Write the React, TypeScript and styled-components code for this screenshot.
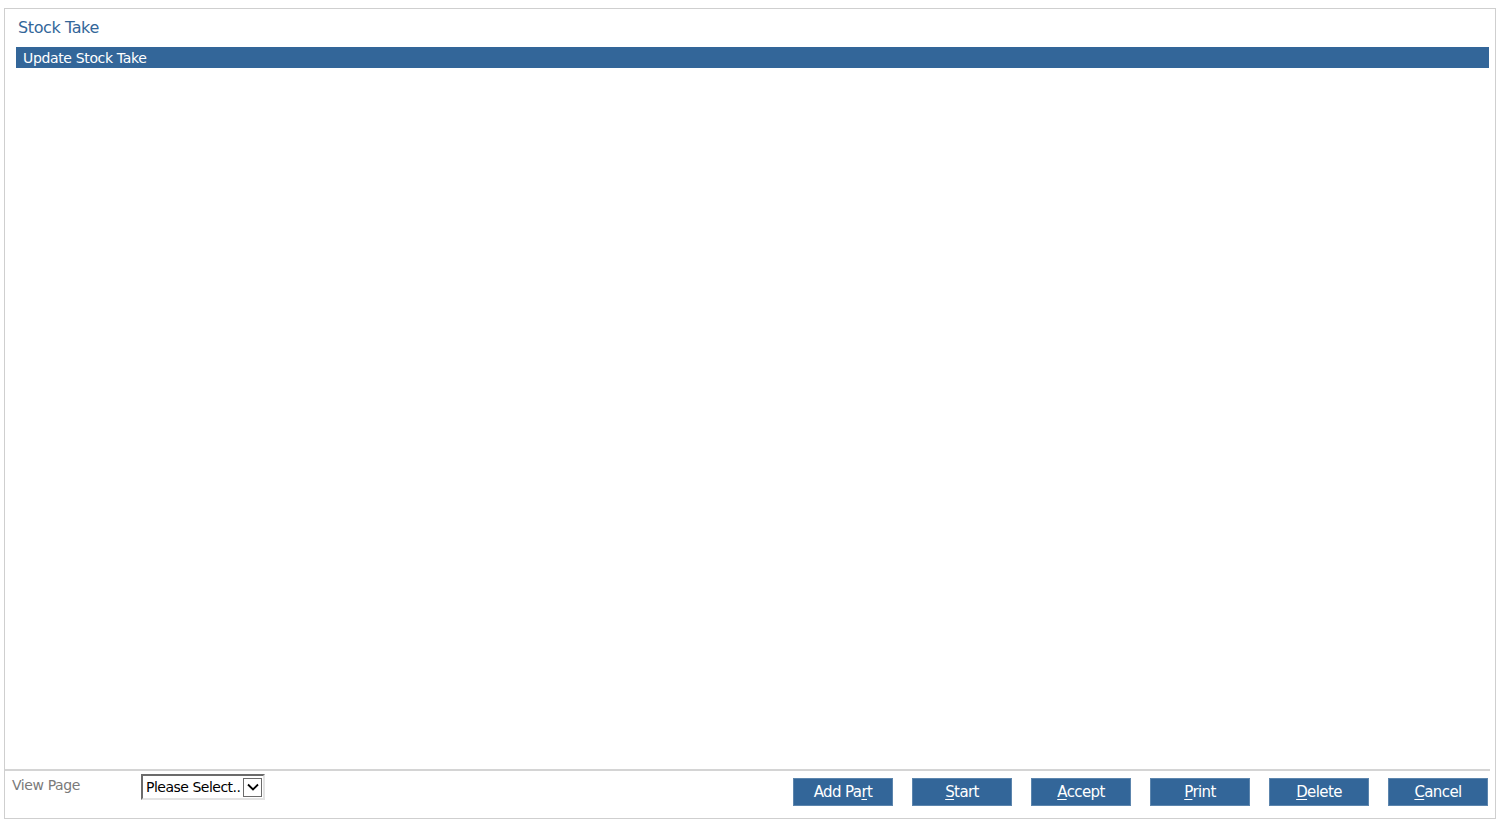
import styled, { createGlobalStyle } from "styled-components"

const GlobalStyle = createGlobalStyle`
    html, body {
        margin: 0;
        padding: 0;
        background: #ffffff;
        font-family: "DejaVu Sans", Verdana, sans-serif;
    }
`

const Frame = styled.div`
    box-sizing: border-box;
    margin: 8px 6px 0 4px;
    height: 811px;
    border: 1px solid #cfcfcf;
    display: flex;
    flex-direction: column;
`

const Title = styled.h1`
    margin: 0;
    padding: 9px 0 0 13px;
    height: 30px;
    box-sizing: border-box;
    font-size: 16px;
    font-weight: normal;
    color: #336699;
    letter-spacing: -0.4px;
`

const SectionBar = styled.div`
    margin: 8px 6px 0 11px;
    box-sizing: border-box;
    height: 21px;
    background: #336699;
    color: #ffffff;
    font-size: 14px;
    line-height: 21px;
    padding: 1px 0 0 7px;
    letter-spacing: -0.35px;
`

const Body = styled.div`
    flex: 1;
`

const Footer = styled.div`
    margin-right: 5px;
    height: 47px;
    border-top: 2px solid #d4d4d4;
    display: flex;
    align-items: flex-start;
`

const PageLabel = styled.span`
    width: 129px;
    padding: 6px 0 0 7px;
    font-size: 14px;
    color: #7a7a7a;
    letter-spacing: -0.4px;
`

const FakeSelect = styled.div`
    margin-top: 3px;
    box-sizing: border-box;
    width: 124px;
    height: 26px;
    border: 2px solid;
    border-color: #6b6b6b #e3e3e3 #e3e3e3 #6b6b6b;
    background: #fff;
    display: flex;
    align-items: center;
    padding-left: 3px;
    font-size: 14px;
    color: #000;
    letter-spacing: -0.5px;
    overflow: hidden;
`

const SelectText = styled.span`
    flex: 1;
    white-space: nowrap;
    overflow: hidden;
`

const SelectArrow = styled.span`
    width: 19px;
    height: 19px;
    box-sizing: border-box;
    border: 1px solid #6b6b6b;
    margin-right: 1px;
    display: flex;
    align-items: center;
    justify-content: center;
`

const Buttons = styled.div`
    margin-left: auto;
    padding: 7px 2px 0 0;
    display: flex;
    gap: 19px;
`

const Button = styled.button`
    width: 100px;
    height: 28px;
    background: #336699;
    border: 1px solid #5c85ad;
    color: #ffffff;
    font-family: "DejaVu Sans", Verdana, sans-serif;
    font-size: 15px;
    letter-spacing: -0.6px;
    padding: 0;
    cursor: pointer;
    :hover {
        filter: brightness(0.9);
    }
`

const AccessKey = styled.span`
    text-decoration: underline;
    text-underline-offset: 2px;
`

const labels: [string, number][] = [
    ["Add Part", 6],
    ["Start", 0],
    ["Accept", 0],
    ["Print", 0],
    ["Delete", 0],
    ["Cancel", 0],
]

export default function App() {
    return (
        <>
            <GlobalStyle />
            <Frame>
                <Title>Stock Take</Title>
                <SectionBar>Update Stock Take</SectionBar>
                <Body />
                <Footer>
                    <PageLabel>View Page</PageLabel>
                    <FakeSelect>
                        <SelectText>Please Select..</SelectText>
                        <SelectArrow>
                            <svg width="12" height="8" viewBox="0 0 12 8">
                                <path d="M1 1.5 L6 6.5 L11 1.5" fill="none" stroke="#000" strokeWidth="1.8" />
                            </svg>
                        </SelectArrow>
                    </FakeSelect>
                    <Buttons>
                        {labels.map(([text, key]) => (
                            <Button key={text}>
                                {text.slice(0, key)}
                                <AccessKey>{text[key]}</AccessKey>
                                {text.slice(key + 1)}
                            </Button>
                        ))}
                    </Buttons>
                </Footer>
            </Frame>
        </>
    )
}
